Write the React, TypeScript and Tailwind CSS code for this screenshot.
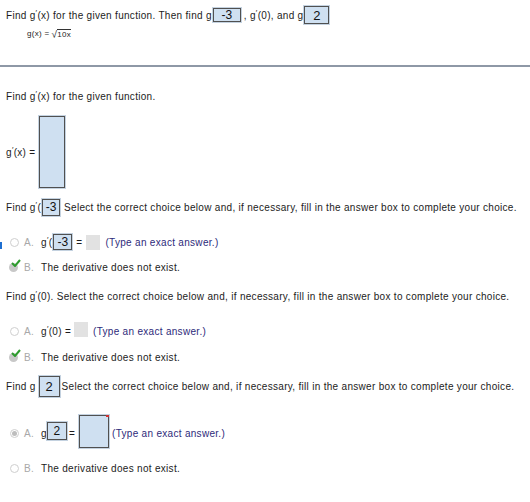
import React from "react"

const font = { fontFamily: '"Liberation Sans", Arial, sans-serif' }

function Box({ children, className = "" }: { children?: React.ReactNode; className?: string }) {
  return (
    <span
      className={
        "inline-flex items-center justify-center bg-[#cfe0f1] border border-[#505050] ring-1 ring-[#c4d2e0] text-[12px] leading-none text-[#111] tracking-normal " +
        className
      }
    >
      {children}
    </span>
  )
}

function GrayBox() {
  return <span className="inline-block w-[14px] h-[15px] bg-[#e2e2e2]" />
}

function Radio({ filled = false }: { filled?: boolean }) {
  return (
    <span className="inline-flex items-center justify-center w-[9px] h-[9px] rounded-full border border-[#cfcfcf] bg-white">
      {filled && <span className="w-[5px] h-[5px] rounded-full bg-[#bdbdbd]" />}
    </span>
  )
}

function Checked() {
  return (
    <span className="relative inline-flex w-[12px] h-[10px] items-end">
      <span className="w-[9px] h-[9px] rounded-full bg-[#c8c8c8]" />
      <svg viewBox="0 0 10 8" className="absolute left-[2px] top-[-3px] w-[10px] h-[8px]">
        <path d="M1 4 L4 7 L9 1" fill="none" stroke="#2e9b2e" strokeWidth="2" />
      </svg>
    </span>
  )
}

function Label({ l }: { l: string }) {
  return <span className="w-[19px] pl-[2px] text-[#a8a8a8]">{l}</span>
}

function Typ() {
  return <span className="text-[#2d2a7a]">(Type an exact answer.)</span>
}

const Prime = () => <span className="text-[8px] align-top relative top-[-1px]">′</span>

export default function App() {
  return (
    <div
      style={font}
      className="w-[530px] h-[502px] bg-white text-[10px] tracking-[0.3px] text-[#1c1c1c] overflow-hidden"
    >
      {/* header */}
      <div className="h-[26px] pt-[4px] pl-[6px] flex items-center">
        <span>
          Find g<Prime />(x) for the given function. Then find g
        </span>
        <Box className="w-[28px] h-[14px] ml-[1px]">-3</Box>
        <span className="ml-[3px]">
          , g<Prime />(0), and g
        </span>
        <Box className="w-[25px] h-[18px] ml-[1px] text-[13px]">2</Box>
      </div>
      <div className="h-[16px] pl-[27px] flex items-center text-[8px]">
        g(x) = <span className="ml-[2px] text-[10px]">√</span>
        <span className="border-t border-[#333] leading-[9px]">10x</span>
      </div>

      <div className="mt-[23px] h-[2px] bg-[#8e98a6]" />

      <div className="mt-[20px] h-[18px] pl-[6px] flex items-center">
        <span>
          Find g<Prime />(x) for the given function.
        </span>
      </div>

      <div className="mt-[10px] h-[74px] pl-[6px] flex items-center">
        <span>
          g<Prime />(x) =
        </span>
        <Box className="w-[26px] h-[72px] ml-[4px]" />
      </div>

      <div className="mt-[8px] h-[20px] pl-[6px] flex items-center">
        <span>
          Find g<Prime />(
        </span>
        <Box className="w-[18px] h-[17px] ml-[1px]">-3</Box>
        <span className="ml-[4px]">
          Select the correct choice below and, if necessary, fill in the answer box to complete your choice.
        </span>
      </div>

      <div className="mt-[14px] h-[22px] flex items-center relative">
        <span className="absolute left-0 top-[11px] w-[2px] h-[7px] bg-[#1f6fd1]" />
        <span className="w-[10px]" />
        <Radio />
        <span className="w-[3px]" />
        <Label l="A." />
        <span>
          g<Prime />(
        </span>
        <Box className="w-[19px] h-[16px] ml-[1px]">-3</Box>
        <span className="ml-[4px] mr-[4px]">=</span>
        <GrayBox />
        <span className="ml-[5px]">
          <Typ />
        </span>
      </div>

      <div className="mt-[4px] h-[20px] flex items-center">
        <span className="w-[9px]" />
        <Checked />
        <span className="w-[1px]" />
        <Label l="B." />
        <span>The derivative does not exist.</span>
      </div>

      <div className="mt-[10px] h-[18px] pl-[6px] flex items-center">
        <span>
          Find g<Prime />(0). Select the correct choice below and, if necessary, fill in the answer box to complete your
          choice.
        </span>
      </div>

      <div className="mt-[16px] h-[20px] flex items-center">
        <span className="w-[10px]" />
        <Radio />
        <span className="w-[3px]" />
        <Label l="A." />
        <span>
          g<Prime />(0) =
        </span>
        <span className="ml-[3px]">
          <GrayBox />
        </span>
        <span className="ml-[5px]">
          <Typ />
        </span>
      </div>

      <div className="mt-[6px] h-[20px] flex items-center">
        <span className="w-[9px]" />
        <Checked />
        <span className="w-[1px]" />
        <Label l="B." />
        <span>The derivative does not exist.</span>
      </div>

      <div className="mt-[7px] h-[24px] pl-[6px] flex items-center">
        <span>Find g</span>
        <Box className="w-[21px] h-[21px] ml-[3px] text-[13px]">2</Box>
        <span className="ml-[2px]">
          Select the correct choice below and, if necessary, fill in the answer box to complete your choice.
        </span>
      </div>

      <div className="mt-[18px] h-[34px] flex items-center">
        <span className="w-[10px]" />
        <Radio filled />
        <span className="w-[3px]" />
        <Label l="A." />
        <span>g</span>
        <Box className="w-[20px] h-[18px] -mt-[4px] text-[12px]">2</Box>
        <span className="ml-[2px]">=</span>
        <span className="relative ml-[4px]">
          <Box className="w-[30px] h-[33px]" />
          <span className="absolute right-0 top-0 w-[3px] h-[2px] bg-[#d23030]" />
        </span>
        <span className="ml-[3px]">
          <Typ />
        </span>
      </div>

      <div className="mt-[8px] h-[20px] flex items-center">
        <span className="w-[10px]" />
        <Radio />
        <span className="w-[3px]" />
        <Label l="B." />
        <span>The derivative does not exist.</span>
      </div>
    </div>
  )
}
